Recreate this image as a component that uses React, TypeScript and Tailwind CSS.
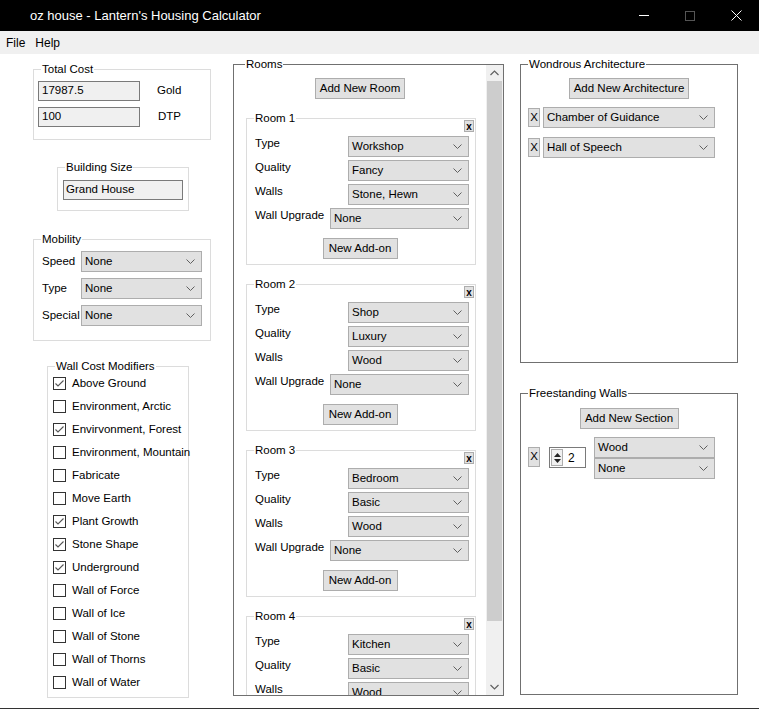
import React from "react";

const F = { fontFamily: '"Liberation Sans", Arial, sans-serif' };

function Chevron() {
  return (
    <svg width="9" height="6" viewBox="0 0 9 6" className="shrink-0">
      <path d="M0.5 0.5 L4.5 4.5 L8.5 0.5" fill="none" stroke="#606060" strokeWidth="1" />
    </svg>
  );
}

function Select({ value, w, className = "" }: { value: string; w: number; className?: string }) {
  return (
    <div
      className={`h-[21px] bg-[#e1e1e1] border border-[#adadad] flex items-center justify-between pl-[3px] pr-[6px] text-[11.5px] text-black ${className}`}
      style={{ width: w }}
    >
      <span>{value}</span>
      <Chevron />
    </div>
  );
}

function Btn({ label, w, className = "" }: { label: string; w: number; className?: string }) {
  return (
    <div
      className={`h-[21px] bg-[#e1e1e1] border border-[#adadad] flex items-center justify-center text-[11.5px] text-black ${className}`}
      style={{ width: w }}
    >
      {label}
    </div>
  );
}

function Group({
  title,
  dark,
  className = "",
  left = 7,
  children,
}: {
  title: string;
  dark?: boolean;
  className?: string;
  left?: number;
  children?: React.ReactNode;
}) {
  return (
    <div className={`relative border ${dark ? "border-[#707070]" : "border-[#dcdcdc]"} ${className}`}>
      <span
        className="absolute -top-[8px] bg-white px-[1px] text-[11.5px] leading-[14px] text-black"
        style={{ left }}
      >
        {title}
      </span>
      {children}
    </div>
  );
}

function Check({ label, on }: { label: string; on?: boolean }) {
  return (
    <div className="flex items-center h-[23px] text-[11.5px]">
      <div className="w-[13px] h-[13px] border border-[#333] bg-white flex items-center justify-center ml-[5px] mr-[6px] shrink-0">
        {on && (
          <svg width="11" height="11" viewBox="0 0 11 11">
            <path d="M1.5 5.5 L4 8 L9.5 2.5" fill="none" stroke="#555" strokeWidth="1.1" />
          </svg>
        )}
      </div>
      <span>{label}</span>
    </div>
  );
}

function Room({ n, type, quality, walls }: { n: number; type: string; quality: string; walls: string }) {
  return (
    <Group title={`Room ${n}`} className="ml-[12px] w-[230px] h-[147px] mb-[19px] shrink-0">
      <div className="absolute right-[1px] top-[1px] w-[10px] h-[12px] bg-[#e1e1e1] border border-[#adadad] text-[10px] leading-[9px] flex items-center justify-center font-bold">
        x
      </div>
      <div className="pt-[17px] flex flex-col gap-[3px] text-[11.5px]">
        {[
          ["Type", type],
          ["Quality", quality],
          ["Walls", walls],
        ].map(([l, v]) => (
          <div key={l} className="flex items-start">
            <span className="pl-[8px] w-[101px] leading-[14px]">{l}</span>
            <Select value={v} w={121} />
          </div>
        ))}
        <div className="flex items-start">
          <span className="pl-[8px] w-[83px] leading-[14px]">Wall Upgrade</span>
          <Select value="None" w={139} />
        </div>
      </div>
      <div className="flex justify-center mt-[9px] pr-[2px]">
        <Btn label="New Add-on" w={75} />
      </div>
    </Group>
  );
}

export default function App() {
  return (
    <div className="w-[759px] h-[709px] bg-white overflow-hidden flex flex-col text-black border-b border-[#333] whitespace-nowrap" style={F}>
      <div className="h-[31px] bg-black text-white flex items-center shrink-0">
        <span className="ml-[30px] text-[13px] flex-1">oz house - Lantern's Housing Calculator</span>
        <div className="w-[46px] flex justify-center">
          <div className="w-[10px] h-[1px] bg-white" />
        </div>
        <div className="w-[46px] flex justify-center">
          <div className="w-[10px] h-[10px] border border-[#555]" />
        </div>
        <div className="w-[46px] flex justify-center">
          <svg width="11" height="11" viewBox="0 0 11 11">
            <path d="M0.5 0.5 L10.5 10.5 M10.5 0.5 L0.5 10.5" stroke="white" strokeWidth="1" />
          </svg>
        </div>
      </div>
      <div className="h-[23px] bg-[#f0f0f0] flex items-center text-[12px] gap-[10px] pl-[6px] shrink-0">
        <span>File</span>
        <span>Help</span>
      </div>
      <div className="flex flex-1 min-h-0">
        {/* left */}
        <div className="ml-[33px] w-[178px] pt-[15px] flex flex-col text-[11.5px]">
          <Group title="Total Cost" className="w-[178px] h-[71px]">
            <div className="pt-[11px] pl-[4px] flex flex-col gap-[6px]">
              <div className="flex items-center">
                <div className="w-[102px] h-[20px] bg-[#f0f0f0] border border-[#7a7a7a] pl-[3px] flex items-center">17987.5</div>
                <span className="ml-[17px]">Gold</span>
              </div>
              <div className="flex items-center">
                <div className="w-[102px] h-[20px] bg-[#f0f0f0] border border-[#7a7a7a] pl-[3px] flex items-center">100</div>
                <span className="ml-[18px]">DTP</span>
              </div>
            </div>
          </Group>
          <Group title="Building Size" className="ml-[24px] mt-[27px] w-[132px] h-[44px]">
            <div className="pt-[12px] pl-[5px]">
              <div className="w-[120px] h-[20px] bg-[#f0f0f0] border border-[#7a7a7a] pl-[2px] flex items-center">Grand House</div>
            </div>
          </Group>
          <Group title="Mobility" className="mt-[28px] w-[178px] h-[102px]">
            <div className="pt-[11px] flex flex-col gap-[6px]">
              {["Speed", "Type", "Special"].map((l) => (
                <div key={l} className="flex items-center">
                  <span className="pl-[8px] w-[47px]">{l}</span>
                  <Select value="None" w={121} />
                </div>
              ))}
            </div>
          </Group>
          <Group title="Wall Cost Modifiers" className="ml-[14px] mt-[25px] w-[142px] h-[332px]">
            <div className="pt-[5px]">
              <Check label="Above Ground" on />
              <Check label="Environment, Arctic" />
              <Check label="Envirvonment, Forest" on />
              <Check label="Environment, Mountain" />
              <Check label="Fabricate" />
              <Check label="Move Earth" />
              <Check label="Plant Growth" on />
              <Check label="Stone Shape" on />
              <Check label="Underground" on />
              <Check label="Wall of Force" />
              <Check label="Wall of Ice" />
              <Check label="Wall of Stone" />
              <Check label="Wall of Thorns" />
              <Check label="Wall of Water" />
            </div>
          </Group>
        </div>

        {/* rooms */}
        <div className="ml-[22px] mt-[10px] w-[271px] h-[632px]">
          <Group title="Rooms" dark left={11} className="w-[271px] h-[632px] flex">
            <div className="flex-1 overflow-hidden flex flex-col">
              <div className="flex justify-center mt-[13px] mb-[19px] shrink-0">
                <Btn label="Add New Room" w={90} />
              </div>
              <Room n={1} type="Workshop" quality="Fancy" walls="Stone, Hewn" />
              <Room n={2} type="Shop" quality="Luxury" walls="Wood" />
              <Room n={3} type="Bedroom" quality="Basic" walls="Wood" />
              <Room n={4} type="Kitchen" quality="Basic" walls="Wood" />
            </div>
            <div className="w-[17px] bg-[#f0f0f0] flex flex-col shrink-0">
              <div className="h-[16px] flex items-center justify-center">
                <svg width="9" height="6" viewBox="0 0 9 6">
                  <path d="M0.5 5 L4.5 1 L8.5 5" fill="none" stroke="#606060" strokeWidth="1.2" />
                </svg>
              </div>
              <div className="mx-[1px] h-[540px] bg-[#cdcdcd]" />
              <div className="flex-1" />
              <div className="h-[16px] flex items-center justify-center">
                <svg width="9" height="6" viewBox="0 0 9 6">
                  <path d="M0.5 1 L4.5 5 L8.5 1" fill="none" stroke="#606060" strokeWidth="1.2" />
                </svg>
              </div>
            </div>
          </Group>
        </div>

        {/* right */}
        <div className="ml-[16px] mt-[10px] w-[218px] flex flex-col text-[11.5px]">
          <Group title="Wondrous Architecture" dark className="w-[218px] h-[299px]">
            <div className="flex justify-center mt-[13px]">
              <Btn label="Add New Architecture" w={120} />
            </div>
            <div className="mt-[8px] flex flex-col gap-[9px]">
              {["Chamber of Guidance", "Hall of Speech"].map((v) => (
                <div key={v} className="flex items-center ml-[7px]">
                  <div className="w-[12px] h-[19px] bg-[#e1e1e1] border border-[#adadad] flex items-center justify-center">X</div>
                  <Select value={v} w={172} className="ml-[3px]" />
                </div>
              ))}
            </div>
          </Group>
          <Group title="Freestanding Walls" dark className="mt-[30px] w-[218px] h-[302px]">
            <div className="flex justify-center mt-[14px]">
              <Btn label="Add New Section" w={99} />
            </div>
            <div className="flex mt-[8px] ml-[7px]">
              <div className="w-[12px] h-[20px] mt-[10px] bg-[#e1e1e1] border border-[#adadad] flex items-center justify-center">X</div>
              <div className="ml-[9px] mt-[10px] w-[37px] h-[21px] border border-[#7a7a7a] flex items-center">
                <div className="w-[12px] h-[17px] ml-[1px] bg-[#f0f0f0] border border-[#adadad] flex flex-col items-center justify-center gap-[2px]">
                  <svg width="7" height="4" viewBox="0 0 7 4"><path d="M0 4 L3.5 0 L7 4Z" fill="#222" /></svg>
                  <svg width="7" height="4" viewBox="0 0 7 4"><path d="M0 0 L3.5 4 L7 0Z" fill="#222" /></svg>
                </div>
                <span className="ml-[5px] text-[12px]">2</span>
              </div>
              <div className="ml-[8px] flex flex-col">
                <Select value="Wood" w={121} />
                <Select value="None" w={121} />
              </div>
            </div>
          </Group>
        </div>
      </div>
    </div>
  );
}
